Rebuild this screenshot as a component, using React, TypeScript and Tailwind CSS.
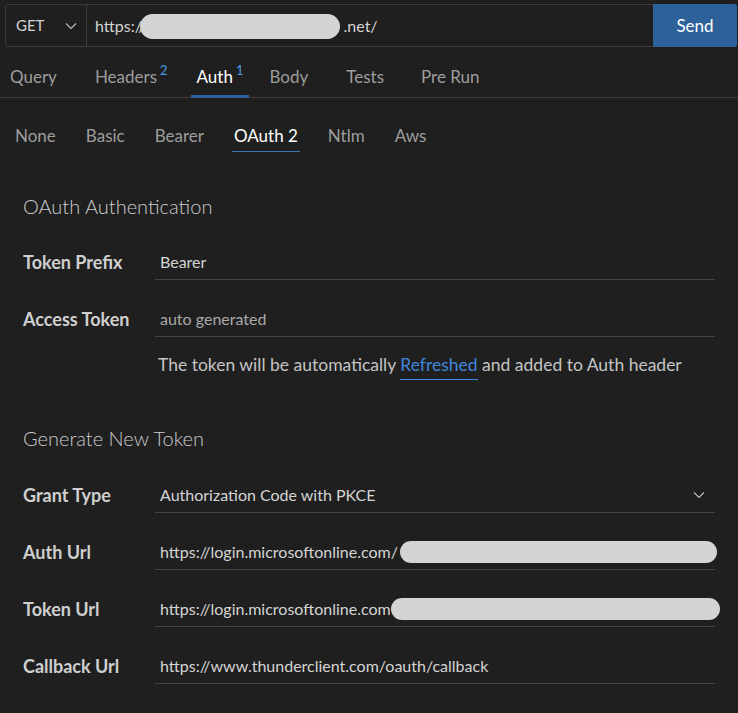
import React from 'react';

const font = "font-['Segoe_UI','Lato','Liberation_Sans',sans-serif]";

function Chevron({ className }: { className?: string }) {
  return (
    <svg className={className} width="12" height="8" viewBox="0 0 12 8" fill="none">
      <path d="M1 1.5 L6 6.5 L11 1.5" stroke="currentColor" strokeWidth="1.2" />
    </svg>
  );
}

// grey smudge used to hide private parts of urls
function Redacted({ className }: { className: string }) {
  return <span className={`absolute rounded-full bg-[#d3d4d6] ${className}`} />;
}

function Field({
  label,
  children,
}: {
  label: string;
  children: React.ReactNode;
}) {
  return (
    <div className="flex items-center h-[57px]">
      <div className="w-[132px] text-[18px] font-bold text-[#cfcfcf]">{label}</div>
      <div className="relative w-[560px] h-[35px] flex items-center border-b border-[#444444] pl-[5px] text-[16px] text-[#d4d4d4]">
        {children}
      </div>
    </div>
  );
}

export default function App() {
  const mainTabs = [
    { name: 'Query', ml: 'ml-0' },
    { name: 'Headers', count: 2, ml: 'ml-[26px]' },
    { name: 'Auth', count: 1, active: true, ml: 'ml-[17px]' },
    { name: 'Body', ml: 'ml-[14px]' },
    { name: 'Tests', ml: 'ml-[26px]' },
    { name: 'Pre Run', ml: 'ml-[25px]' },
  ];
  const authTabs = ['None', 'Basic', 'Bearer', 'OAuth 2', 'Ntlm', 'Aws'];

  return (
    <div className={`w-[738px] h-[713px] bg-[#1f1f1f] overflow-hidden ${font}`}>
      {/* request bar */}
      <div className="pt-[4px] pl-[5px] pr-[1px]">
        <div className="flex h-[43px] border border-[#3c3c3c] rounded-[3px]">
          <div className="w-[81px] flex items-center justify-between pl-[10px] pr-[9px] border-r border-[#3c3c3c] text-[15px] text-[#d4d4d4]">
            <span>GET</span>
            <Chevron className="text-[#bbbbbb]" />
          </div>
          <div className="relative flex-1 flex items-center pl-[8px] text-[16px] text-[#d4d4d4]">
            <span>https://</span>
            <span className="w-[198px]" />
            <span>.net/</span>
            <Redacted className="left-[53px] top-[9px] w-[200px] h-[25px]" />
          </div>
          <button className="w-[84px] -my-px -mr-px bg-[#2c6299] rounded-r-[3px] text-[17px] text-white">
            Send
          </button>
        </div>
      </div>

      {/* main tabs */}
      <div className="flex h-[51px] border-b border-[#3c3c3c] pl-[4px]">
        {mainTabs.map((t) => (
          <div
            key={t.name}
            className={`flex items-center pt-[12px] px-[6px] -mb-px border-b-[3px] text-[17px] ${t.ml} ${
              t.active ? 'border-[#2c6299] text-white' : 'border-transparent text-[#9d9d9d]'
            }`}
          >
            <span>{t.name}</span>
            {t.count && (
              <span className="relative -top-[6px] ml-[3px] text-[13px] text-[#4a9ae6]">{t.count}</span>
            )}
          </div>
        ))}
      </div>

      {/* auth type tabs */}
      <div className="flex pl-[13px] pt-[25px] gap-[26px]">
        {authTabs.map((t) => (
          <div
            key={t}
            className={`px-[2px] pb-[2px] text-[17px] border-b ${
              t === 'OAuth 2' ? 'border-[#3a76b5] text-white' : 'border-transparent text-[#9d9d9d]'
            }`}
          >
            {t}
          </div>
        ))}
      </div>

      <div className="pl-[23px]">
        <h2 className="mt-[39px] mb-[13px] text-[20px] leading-[30px] font-light text-[#cccccc]">
          OAuth Authentication
        </h2>

        <Field label="Token Prefix">Bearer</Field>
        <Field label="Access Token">
          <span className="text-[#a9a9a9]">auto generated</span>
        </Field>
        <p className="ml-[135px] mt-[4px] text-[17.5px] leading-[26px] text-[#c4c4c4]">
          The token will be automatically{' '}
          <span className="text-[#3f86dc] border-b border-[#3f86dc] pb-[4px]">Refreshed</span> and added
          to Auth header
        </p>

        <h2 className="mt-[45px] mb-[14px] text-[20px] leading-[30px] font-light text-[#cccccc]">
          Generate New Token
        </h2>

        <Field label="Grant Type">
          <span className="flex-1">Authorization Code with PKCE</span>
          <Chevron className="mr-[10px] text-[#bbbbbb]" />
        </Field>
        <Field label="Auth Url">
          https://login.microsoftonline.com/
          <Redacted className="left-[245px] top-[6px] w-[317px] h-[22px]" />
        </Field>
        <Field label="Token Url">
          https://login.microsoftonline.com
          <Redacted className="left-[236px] top-[6px] w-[329px] h-[22px]" />
        </Field>
        <Field label="Callback Url">https://www.thunderclient.com/oauth/callback</Field>
      </div>
    </div>
  );
}
